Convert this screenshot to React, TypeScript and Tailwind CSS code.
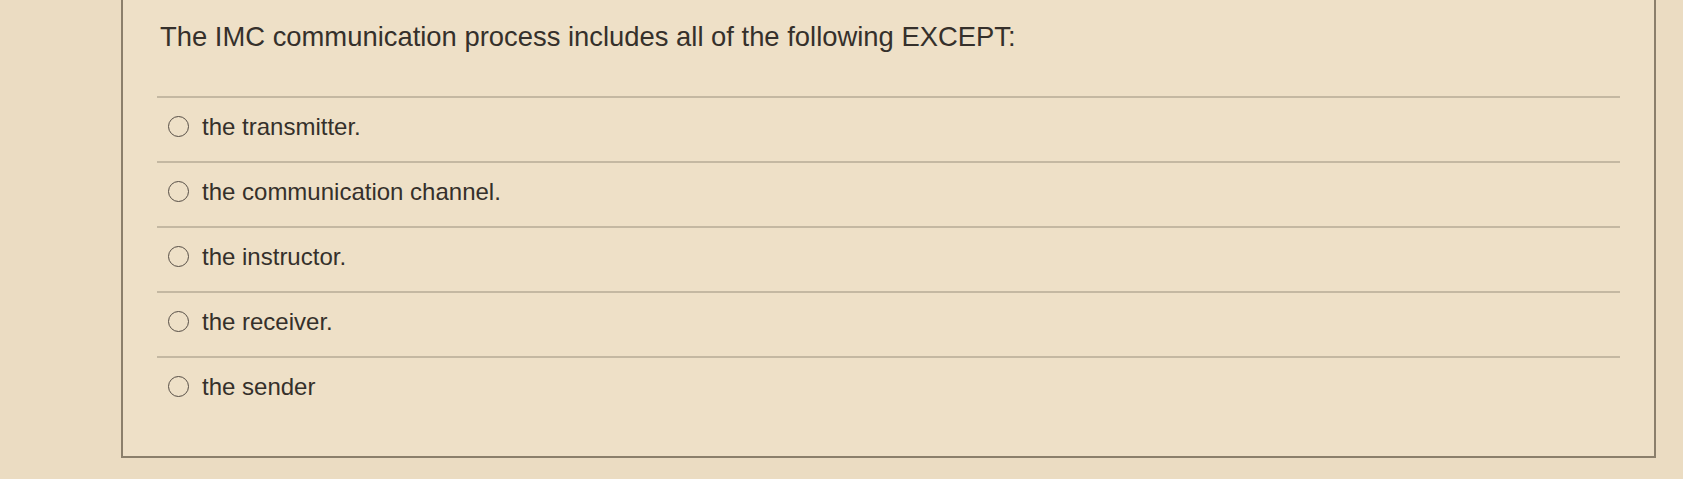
const options = [
  'the transmitter.',
  'the communication channel.',
  'the instructor.',
  'the receiver.',
  'the sender',
];

export default function App() {
  return (
    <div className="min-h-screen bg-[#ebdcc2] pl-[121px] pr-[27px] font-['Liberation_Sans',Arial,sans-serif] text-[#35302b]">
      <div className="h-[458px] border-x-2 border-b-2 border-[#8b7f6b] bg-[#eee0c7] pl-[34px] pr-[34px] pt-[21px]">
        <p className="text-[27.4px] leading-[31px] pl-[3px]">
          The IMC communication process includes all of the following EXCEPT:
        </p>

        <div className="mt-[44px]">
          {options.map((opt) => (
            <div key={opt} className="flex h-[65px] items-center border-t-2 border-[#c4b8a2] pb-[6px] pl-[11px]">
              <span className="h-[21px] w-[21px] shrink-0 rounded-full border-[1.5px] border-[#564e46]" />
              <span className="ml-[13px] text-[24px] leading-none">{opt}</span>
            </div>
          ))}
        </div>
      </div>
    </div>
  );
}
